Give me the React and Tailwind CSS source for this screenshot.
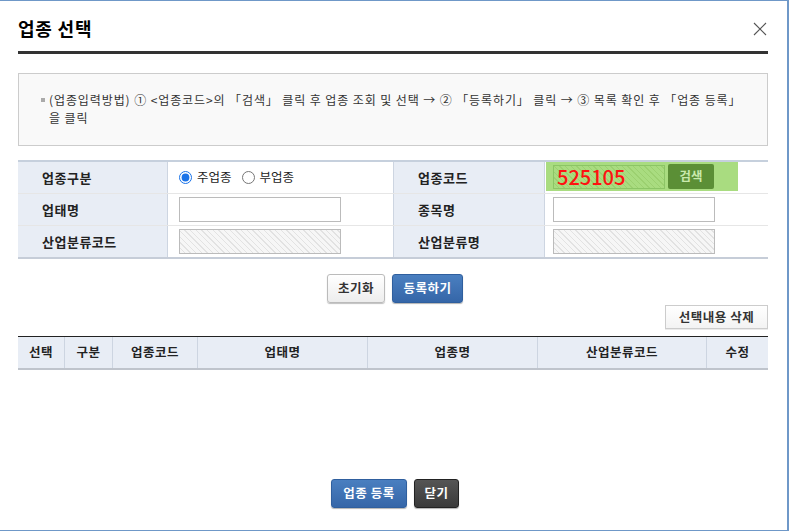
import React, { useState } from 'react';

const hatch =
  'bg-[repeating-linear-gradient(45deg,#f6f6f6_0px,#f6f6f6_3px,#e2e2e2_3px,#e2e2e2_4px)]';

const columns = [
  { label: '선택', w: 'w-[47px]' },
  { label: '구분', w: 'w-[48px]' },
  { label: '업종코드', w: 'w-[85px]' },
  { label: '업태명', w: 'w-[170px]' },
  { label: '업종명', w: 'w-[170px]' },
  { label: '산업분류코드', w: 'w-[169px]' },
  { label: '수정', w: 'flex-1' },
];

// Label cell of the form table
const LabelCell = ({ children, w }) => (
  <div className={`${w} bg-[#e8edf5] flex items-center pl-[24px] text-[13px] font-bold tracking-[0.5px] text-[#222] border-r border-[#cdd5e1]`}>
    {children}
  </div>
);

const App = () => {
  const [kind, setKind] = useState('main');

  return (
    <div
      className="w-[789px] h-[531px] bg-white border-t border-b border-r-2 border-[#6f98c8] overflow-hidden text-[#222]"
      style={{ fontFamily: '"Noto Sans CJK KR", "Noto Sans", sans-serif' }}
    >
      <div className="pl-[18px] w-[768px]">
        {/* header */}
        <div className="flex items-center justify-between pt-[17px] pb-[13px] border-b-[3px] border-[#333]">
          <h1 className="text-[18px] leading-[20px] font-bold tracking-[0.8px] text-black">업종 선택</h1>
          <svg width="14" height="14" viewBox="0 0 14 14" className="mr-[1px] mt-[2px]">
            <path d="M1 1L13 13M13 1L1 13" stroke="#555" strokeWidth="1.1" fill="none" />
          </svg>
        </div>

        {/* guide box */}
        <div className="mt-[19px] h-[73px] border border-[#ccc] bg-[#f9f9f9] pt-[17px] pl-[22px] text-[12px] leading-[18px] tracking-[0.9px] text-[#333]">
          <div className="flex">
            <span className="w-[4px] h-[4px] bg-[#aaa] mt-[7px] mr-[4px] shrink-0"></span>
            <p className="whitespace-nowrap">
              (업종입력방법) ① &lt;업종코드&gt;의 「검색」 클릭 후 업종 조회 및 선택 → ② 「등록하기」 클릭 → ③ 목록 확인 후 「업종 등록」
              <br />을 클릭
            </p>
          </div>
        </div>

        {/* form table */}
        <div className="mt-[14px] border-t-2 border-[#c6d0dd] border-b-2 border-b-[#c6cdd8]">
          <div className="flex h-[32px] border-b border-[#e6e6e6]">
            <LabelCell w="w-[150px]">업종구분</LabelCell>
            <div className="w-[225px] flex items-center pl-[11px] text-[12.5px] gap-[10px]">
              <label className="flex items-center gap-[5px]">
                <input
                  type="radio"
                  name="kind"
                  checked={kind === 'main'}
                  onChange={() => setKind('main')}
                  className="w-[13px] h-[13px] m-0 accent-[#1a73e8]"
                />
                주업종
              </label>
              <label className="flex items-center gap-[5px]">
                <input
                  type="radio"
                  name="kind"
                  checked={kind === 'sub'}
                  onChange={() => setKind('sub')}
                  className="w-[13px] h-[13px] m-0 accent-[#1a73e8]"
                />
                부업종
              </label>
            </div>
            <LabelCell w="w-[152px] border-l border-l-[#cdd5e1]">업종코드</LabelCell>
            <div className="flex-1 flex items-start pl-[1px] pt-[0px]">
              <div className="w-[192px] h-[29px] bg-[#a9dc80] flex items-center pl-[7px] gap-[3px]">
                <div className="w-[112px] h-[24px] border border-[#8cc566] bg-[repeating-linear-gradient(45deg,#a9dc80_0px,#a9dc80_3px,#9cd070_3px,#9cd070_4px)] flex items-center pl-[3px] text-[20px] font-medium leading-none text-[#ff1111]">
                  525105
                </div>
                <button className="w-[46px] h-[25px] rounded-[2px] bg-[#5b8f36] text-[12.5px] font-bold text-[#c9e9ad]">
                  검색
                </button>
              </div>
            </div>
          </div>

          <div className="flex h-[32px] border-b border-[#e6e6e6]">
            <LabelCell w="w-[150px]">업태명</LabelCell>
            <div className="w-[225px] flex items-center pl-[11px]">
              <input className="w-[162px] h-[25px] border border-[#bbb] bg-white" />
            </div>
            <LabelCell w="w-[152px] border-l border-l-[#cdd5e1]">종목명</LabelCell>
            <div className="flex-1 flex items-center pl-[8px]">
              <input className="w-[162px] h-[25px] border border-[#bbb] bg-white" />
            </div>
          </div>

          <div className="flex h-[31px]">
            <LabelCell w="w-[150px]">산업분류코드</LabelCell>
            <div className="w-[225px] flex items-center pl-[11px]">
              <div className={`w-[162px] h-[25px] border border-[#bbb] ${hatch}`}></div>
            </div>
            <LabelCell w="w-[152px] border-l border-l-[#cdd5e1]">산업분류명</LabelCell>
            <div className="flex-1 flex items-center pl-[8px]">
              <div className={`w-[162px] h-[25px] border border-[#bbb] ${hatch}`}></div>
            </div>
          </div>
        </div>

        {/* form buttons */}
        <div className="mt-[15px] flex justify-center gap-[7px] pl-[4px]">
          <button className="w-[58px] h-[29px] rounded-[3px] border border-[#bbb] bg-[linear-gradient(#ffffff,#ededed)] shadow-[0_1px_1px_rgba(0,0,0,0.25)] text-[12.5px] font-bold tracking-[0.5px] text-[#333]">
            초기화
          </button>
          <button className="w-[71px] h-[29px] rounded-[3px] border border-[#2f5f9e] bg-[linear-gradient(#4a7fc0,#3566a8)] shadow-[0_1px_1px_rgba(0,0,0,0.3)] text-[12.5px] font-bold tracking-[0.5px] text-white">
            등록하기
          </button>
        </div>

        <div className="mt-[2px] flex justify-end">
          <button className="w-[103px] h-[24px] border border-[#ccc] bg-[linear-gradient(#ffffff,#f3f3f3)] text-[12.5px] font-bold tracking-[0.5px] text-[#333] shadow-[0_1px_0_rgba(0,0,0,0.08)]">
            선택내용 삭제
          </button>
        </div>

        {/* list table */}
        <div className="mt-[7px] border-t border-[#222] border-b-2 border-b-[#bfc4cc] flex h-[34px] bg-[#e8edf5]">
          {columns.map((c, i) => (
            <div
              key={c.label}
              className={`${c.w} flex items-center justify-center text-[12.5px] font-bold tracking-[0.5px] text-[#222] ${i < columns.length - 1 ? 'border-r border-[#cdd5e1]' : ''}`}
            >
              {c.label}
            </div>
          ))}
        </div>

        {/* bottom buttons */}
        <div className="mt-[109px] flex justify-center gap-[7px] pl-[4px]">
          <button className="w-[76px] h-[29px] rounded-[3px] border border-[#2f5f9e] bg-[linear-gradient(#4a7fc0,#3566a8)] shadow-[0_1px_1px_rgba(0,0,0,0.3)] text-[12.5px] font-bold tracking-[0.5px] text-white">
            업종 등록
          </button>
          <button className="w-[45px] h-[29px] rounded-[3px] border border-[#222] bg-[linear-gradient(#555,#3a3a3a)] shadow-[0_1px_1px_rgba(0,0,0,0.3)] text-[12.5px] font-bold tracking-[0.5px] text-white">
            닫기
          </button>
        </div>
      </div>
    </div>
  );
};

export default App;
